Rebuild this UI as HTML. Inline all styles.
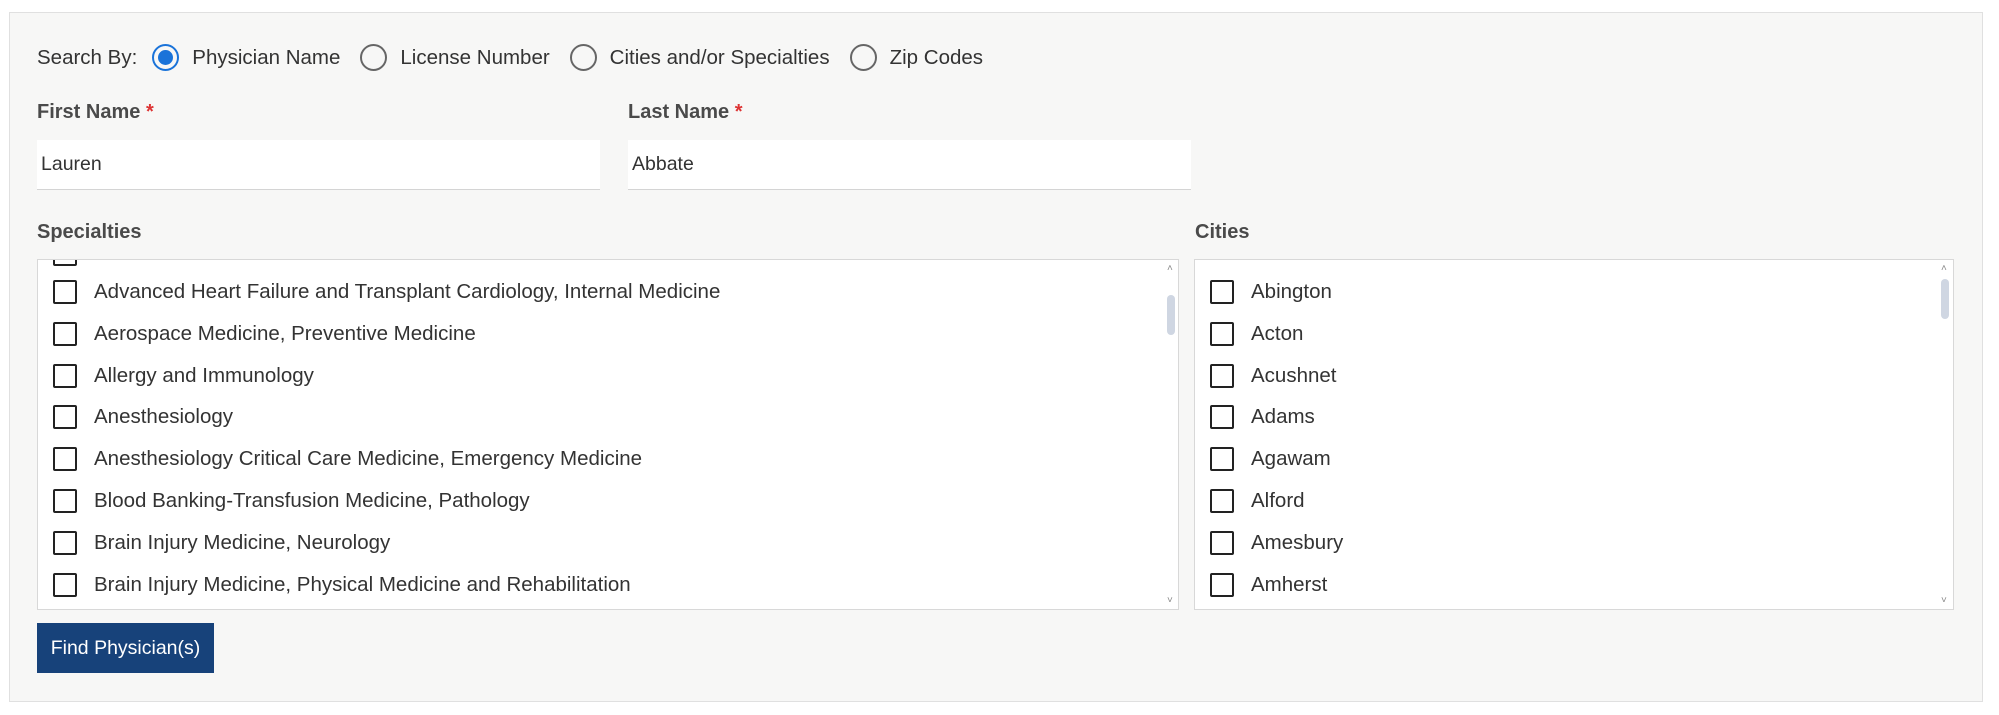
<!DOCTYPE html>
<html><head><style>
*{box-sizing:border-box;margin:0;padding:0}
body{width:1999px;height:715px;background:#fff;font-family:"Liberation Sans",sans-serif;color:#333;position:relative;overflow:hidden}
.panel{position:absolute;left:9px;top:12px;width:1974px;height:690px;background:#f7f7f6;border:1px solid #e0e0e0}
.abs{position:absolute}
.sb{top:44px;left:37px;font-size:20.5px;line-height:24px;display:flex;align-items:center;color:#333}
.radio{width:27px;height:27px;border:2px solid #666;border-radius:50%;display:inline-block;margin:0 13px 0 20px;position:relative}
.radio.first{margin-left:15px}
.radio.on{border-color:#1a73d9}
.radio.on:after{content:"";position:absolute;left:4px;top:4px;width:15px;height:15px;border-radius:50%;background:#1a73d9}
.lbl{font-size:20px;font-weight:bold;color:#4a4a4a;line-height:24px}
.lbl span{color:#d33}
.inp{background:#fff;border-bottom:1px solid #d4d4d4;font-size:19.5px;padding-left:4px;line-height:49px;height:50px}
.list{background:#fff;border:1px solid #d8d8d8;overflow:hidden}
.item{position:absolute;left:15px;height:24px;display:flex;align-items:center;font-size:20.5px;color:#333;white-space:nowrap}
.cb{width:24px;height:24px;border:2px solid #222;border-radius:2px;margin-right:17px;flex:none}
.thumb{position:absolute;width:8px;border-radius:4px;background:#cfd6e2}
.arr{position:absolute;font-size:10px;color:#888}
.btn{left:37px;top:623px;width:177px;height:50px;background:#17427a;color:#fff;font-size:19.5px;line-height:50px;text-align:center}
</style></head><body>
<div class="panel"></div>
<div class="abs sb">Search By:<span class="radio on first"></span>Physician Name<span class="radio"></span>License Number<span class="radio"></span>Cities and/or Specialties<span class="radio"></span>Zip Codes</div>
<div class="abs lbl" style="left:37px;top:100px">First Name <span>*</span></div>
<div class="abs lbl" style="left:628px;top:100px">Last Name <span>*</span></div>
<div class="abs inp" style="left:37px;top:140px;width:563px">Lauren</div>
<div class="abs inp" style="left:628px;top:140px;width:563px">Abbate</div>
<div class="abs lbl" style="left:37px;top:220px">Specialties</div>
<div class="abs lbl" style="left:1195px;top:220px">Cities</div>
<div class="abs list" style="left:37px;top:259px;width:1142px;height:351px">
<div class="item" style="top:-18px"><span class="cb"></span></div>
<div class="item" style="top:20px"><span class="cb"></span>Advanced Heart Failure and Transplant Cardiology, Internal Medicine</div>
<div class="item" style="top:62px"><span class="cb"></span>Aerospace Medicine, Preventive Medicine</div>
<div class="item" style="top:104px"><span class="cb"></span>Allergy and Immunology</div>
<div class="item" style="top:145px"><span class="cb"></span>Anesthesiology</div>
<div class="item" style="top:187px"><span class="cb"></span>Anesthesiology Critical Care Medicine, Emergency Medicine</div>
<div class="item" style="top:229px"><span class="cb"></span>Blood Banking-Transfusion Medicine, Pathology</div>
<div class="item" style="top:271px"><span class="cb"></span>Brain Injury Medicine, Neurology</div>
<div class="item" style="top:313px"><span class="cb"></span>Brain Injury Medicine, Physical Medicine and Rehabilitation</div>
<div class="thumb" style="left:1129px;top:35px;height:40px"></div>
<div class="arr" style="left:1129px;top:3px">˄</div>
<div class="arr" style="left:1129px;top:335px">˅</div>
</div>
<div class="abs list" style="left:1194px;top:259px;width:760px;height:351px">
<div class="item" style="top:20px"><span class="cb"></span>Abington</div>
<div class="item" style="top:62px"><span class="cb"></span>Acton</div>
<div class="item" style="top:104px"><span class="cb"></span>Acushnet</div>
<div class="item" style="top:145px"><span class="cb"></span>Adams</div>
<div class="item" style="top:187px"><span class="cb"></span>Agawam</div>
<div class="item" style="top:229px"><span class="cb"></span>Alford</div>
<div class="item" style="top:271px"><span class="cb"></span>Amesbury</div>
<div class="item" style="top:313px"><span class="cb"></span>Amherst</div>
<div class="thumb" style="left:746px;top:19px;height:40px"></div>
<div class="arr" style="left:746px;top:3px">˄</div>
<div class="arr" style="left:746px;top:335px">˅</div>
</div>
<div class="abs btn">Find Physician(s)</div>
</body></html>
